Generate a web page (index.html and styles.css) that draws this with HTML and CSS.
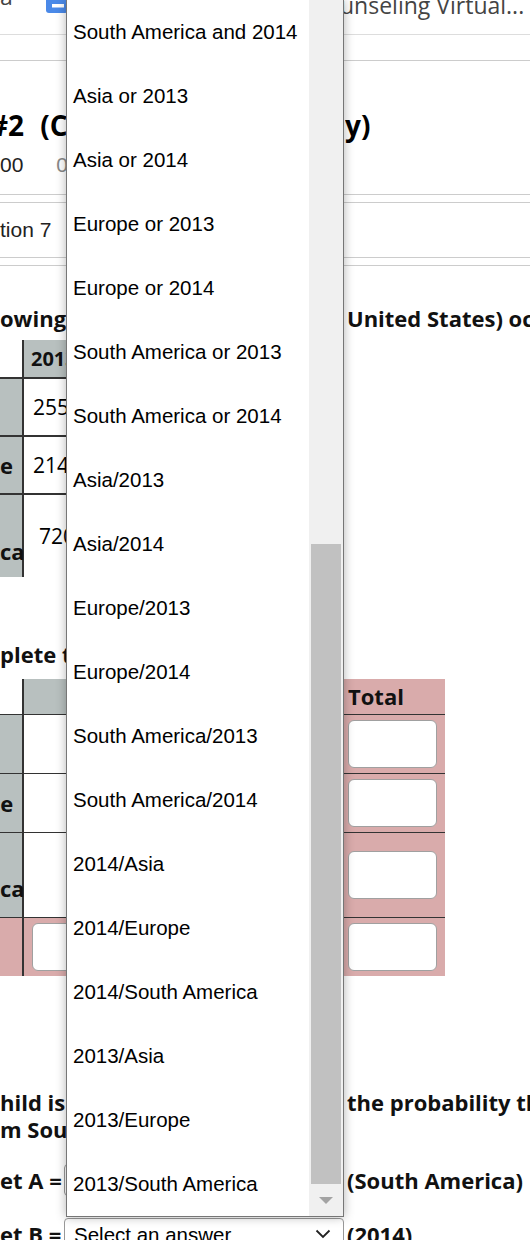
FILE: index.html
```html
<!DOCTYPE html>
<html lang="en">
<head>
    <meta charset="UTF-8">
    <meta name="viewport" content="width=device-width, initial-scale=1.0">
    <title>Quiz</title>
    <link rel="stylesheet" href="styles.css">
</head>
<body>
    <header class="topbar">
        <div class="topbar-left">
            <span class="crumb crumb-home">a</span>
            <span class="app-icon">
                <svg width="22" height="22" viewBox="0 0 22 22">
                    <rect x="0" y="0" width="22" height="22" rx="3" fill="#4a89e8"/>
                    <rect x="6" y="13" width="12" height="3.5" fill="#fff"/>
                </svg>
            </span>
        </div>
        <div class="crumb crumb-title">unseling Virtual...</div>
    </header>
    <div class="toolbar"></div>

    <main class="quiz">
        <section class="q-head">
            <h1 class="q-title pair"><span class="lead">#2 (Co</span><span class="tail">y)</span></h1>
            <div class="q-points"><span>00</span><span class="muted">0/</span></div>
        </section>

        <nav class="q-nav">tion 7</nav>

        <section class="q-body">
            <p class="pair"><span class="lead">owing</span><span class="tail">United States) occurred in 2013 and 2014.</span></p>

            <!-- adoptions by region and year -->
            <table class="data">
                <tr class="head">
                    <th class="corner"></th>
                    <th class="year y1">2013</th>
                    <th class="year y2"></th>
                </tr>
                <tr class="r1">
                    <th class="side"></th>
                    <td>2557</td>
                    <td></td>
                </tr>
                <tr class="r2">
                    <th class="side">e</th>
                    <td>2146</td>
                    <td></td>
                </tr>
                <tr class="r3">
                    <th class="side low">ca</th>
                    <td>720</td>
                    <td></td>
                </tr>
            </table>

            <p class="plain table-intro">plete th</p>

            <table class="fill">
                <tr class="head">
                    <th class="corner"></th>
                    <th class="year"></th>
                    <th class="year"></th>
                    <th class="year"></th>
                    <th class="total">Total</th>
                </tr>
                <tr class="r1">
                    <th class="side"></th>
                    <td></td><td></td><td></td>
                    <td class="total"><input class="cell-input" type="text"></td>
                </tr>
                <tr class="r2">
                    <th class="side">e</th>
                    <td></td><td></td><td></td>
                    <td class="total"><input class="cell-input" type="text"></td>
                </tr>
                <tr class="r3">
                    <th class="side low">ca</th>
                    <td></td><td></td><td></td>
                    <td class="total"><input class="cell-input" type="text"></td>
                </tr>
                <tr class="r4 sum">
                    <th class="side"></th>
                    <td><input class="cell-input" type="text"></td>
                    <td></td><td></td>
                    <td class="total"><input class="cell-input" type="text"></td>
                </tr>
            </table>

            <p class="pair first-q"><span class="lead">hild is</span><span class="tail">the probability that the child</span></p>
            <p class="plain">m Sout</p>

            <div class="set-row set-a">
                <span class="set-label">et A =</span>
                <div class="select"></div>
                <span class="set-answer">(South America)</span>
            </div>
            <div class="set-row set-b">
                <span class="set-label">et B =</span>
                <div class="select">
                    <span>Select an answer</span>
                    <svg class="chevron" width="16" height="10" viewBox="0 0 16 10">
                        <polyline points="1.5,1.5 8,8 14.5,1.5" fill="none" stroke="#222" stroke-width="1.8"/>
                    </svg>
                </div>
                <span class="set-answer">(2014)</span>
            </div>
        </section>
    </main>

    <!-- open options list of the Set B select -->
    <div class="listbox">
        <ul class="options">
            <li>South America and 2014</li>
            <li>Asia or 2013</li>
            <li>Asia or 2014</li>
            <li>Europe or 2013</li>
            <li>Europe or 2014</li>
            <li>South America or 2013</li>
            <li>South America or 2014</li>
            <li>Asia/2013</li>
            <li>Asia/2014</li>
            <li>Europe/2013</li>
            <li>Europe/2014</li>
            <li>South America/2013</li>
            <li>South America/2014</li>
            <li>2014/Asia</li>
            <li>2014/Europe</li>
            <li>2014/South America</li>
            <li>2013/Asia</li>
            <li>2013/Europe</li>
            <li>2013/South America</li>
        </ul>
        <div class="scrollbar">
            <div class="thumb"></div>
            <div class="arrow-down"></div>
        </div>
    </div>
</body>
</html>
```

FILE: styles.css
```css
* {
    margin: 0;
    padding: 0;
    box-sizing: border-box;
}

body {
    position: relative;
    width: 530px;
    height: 1240px;
    overflow: hidden;
    background: #fff;
    color: #111;
    font-family: "Open Sans", "Liberation Sans", sans-serif;
}

/* top bar */
.topbar {
    display: grid;
    grid-template-columns: 340px 1fr;
    height: 35px;
    border-bottom: 1px solid #ddd;
}

.topbar-left {
    display: flex;
    align-items: flex-start;
}

.crumb {
    font-size: 23px;
    line-height: 22px;
    color: #444;
    white-space: nowrap;
}

.crumb-home {
    margin-top: -15px;
}

.crumb-title {
    margin-top: -6px;
}

.app-icon {
    margin-left: 33px;
    margin-top: -9px;
    height: 22px;
}

.toolbar {
    height: 26px;
    border-bottom: 1px solid #ccc;
}

/* question header */
.pair {
    display: grid;
    grid-template-columns: 347px 1fr;
    white-space: nowrap;
}

.pair .tail {
    overflow: hidden;
}

.q-head {
    padding: 46px 0 16px;
    border-bottom: 1px solid #ccc;
}

.q-title {
    grid-template-columns: 345px 1fr;
    font-size: 28px;
    line-height: 36px;
    font-weight: 700;
    color: #000;
}

.q-title .lead {
    margin-left: -10px;
    word-spacing: 9px;
}

.q-points {
    display: flex;
    gap: 33px;
    margin-top: 9px;
    font-family: "Liberation Sans", Arial, sans-serif;
    font-size: 21px;
    line-height: 26px;
    color: #222;
}

.q-points .muted {
    color: #888;
}

.q-nav {
    margin-top: 7px;
    height: 56px;
    border-top: 1px solid #ccc;
    border-bottom: 1px solid #ccc;
    font-family: "Liberation Sans", Arial, sans-serif;
    font-size: 21px;
    line-height: 54px;
    color: #222;
    white-space: nowrap;
}

/* question body */
.q-body {
    margin-top: 7px;
    padding-top: 39px;
    border-top: 1px solid #ccc;
    font-size: 22px;
    line-height: 27px;
    font-weight: 700;
}

.plain {
    white-space: nowrap;
}

.table-intro {
    margin-top: 64px;
}

/* tables */
table {
    border-spacing: 0;
    table-layout: fixed;
}

th, td {
    padding: 0;
    font-size: 20px;
    vertical-align: middle;
}

.side {
    text-align: right;
    padding-right: 9px;
    font-size: 22px;
    font-weight: 700;
    border-right: 2px solid #333;
}

.side.low {
    vertical-align: bottom;
}

.data {
    width: 150px;
    margin-top: 8px;
}

.data .corner {
    width: 24px;
    border-right: 2px solid #333;
}

.data .year {
    background: #b8c0bf;
    font-weight: 700;
    text-align: left;
    padding-left: 7px;
}

.data .y1 {
    width: 66px;
}

.data .y2 {
    width: 60px;
}

.data .head th {
    height: 37px;
}

.data .r1 > *,
.data .r2 > *,
.data .r3 > * {
    border-top: 2px solid #333;
}

.data .side {
    background: #b8c0bf;
}

.data td {
    text-align: center;
    font-weight: 400;
    font-size: 21px;
    color: #000;
}

.data .r1 > *,
.data .r2 > * {
    height: 58px;
}

.data .r3 > * {
    height: 84px;
}

.data .r3 .side {
    padding-bottom: 12px;
}

.fill {
    width: 445px;
    margin-top: 11px;
}

.fill .corner {
    width: 24px;
    border-right: 2px solid #333;
}

.fill .year {
    width: 103px;
    background: #b8c0bf;
}

.fill .total {
    width: 108px;
    background: #d9abab;
    padding: 0 8px 0 12px;
    text-align: left;
}

.fill .head th {
    height: 35px;
    font-size: 22px;
}

.fill .r1 > *,
.fill .r2 > *,
.fill .r3 > *,
.fill .r4 > * {
    border-top: 1px solid #333;
}

.fill .r1 > *,
.fill .r2 > *,
.fill .r4 > * {
    height: 59px;
}

.fill .r3 > * {
    height: 85px;
}

.fill .r3 .side {
    padding-bottom: 15px;
}

.fill .side {
    background: #b8c0bf;
}

.fill .sum > * {
    background: #d9abab;
}

.fill .sum td:nth-child(2) {
    padding-left: 8px;
}

.cell-input {
    display: block;
    width: 100%;
    height: 48px;
    border: 1px solid #a0a0a0;
    border-radius: 6px;
    background: #fff;
}

.first-q {
    margin-top: 113px;
}

/* set rows with selects */
.set-row {
    display: grid;
    grid-template-columns: 64px 280px 1fr;
    align-items: center;
    height: 32px;
    white-space: nowrap;
}

.set-a {
    margin-top: 21px;
}

.set-b {
    margin-top: 22px;
}

.set-answer {
    padding-left: 3px;
}

.select {
    display: flex;
    align-items: center;
    justify-content: space-between;
    height: 32px;
    padding: 0 12px 0 9px;
    border: 1px solid #999;
    border-radius: 4px;
    background: #fff;
    font-family: "Liberation Sans", Arial, sans-serif;
    font-size: 20.5px;
    font-weight: 400;
    color: #000;
}

/* dropdown list */
.listbox {
    position: absolute;
    left: 66px;
    top: 0;
    width: 278px;
    display: flex;
    background: #fff;
    border: 1px solid #767676;
    border-top: none;
    box-shadow: 0 0 10px rgba(0, 0, 0, 0.3);
}

.options {
    list-style: none;
    width: 242px;
}

.options li {
    height: 64px;
    line-height: 64px;
    padding-left: 6px;
    font-family: "Liberation Sans", Arial, sans-serif;
    font-size: 20.5px;
    color: #000;
    white-space: nowrap;
}

.scrollbar {
    width: 34px;
    display: flex;
    flex-direction: column;
    background: #f0f0f0;
}

.thumb {
    margin: 544px 2px 0;
    height: 640px;
    background: #c1c1c1;
}

.arrow-down {
    flex: 1;
    display: flex;
    align-items: center;
    justify-content: center;
}

.arrow-down::after {
    content: "";
    border-left: 7px solid transparent;
    border-right: 7px solid transparent;
    border-top: 7px solid #a3a3a3;
}
```
